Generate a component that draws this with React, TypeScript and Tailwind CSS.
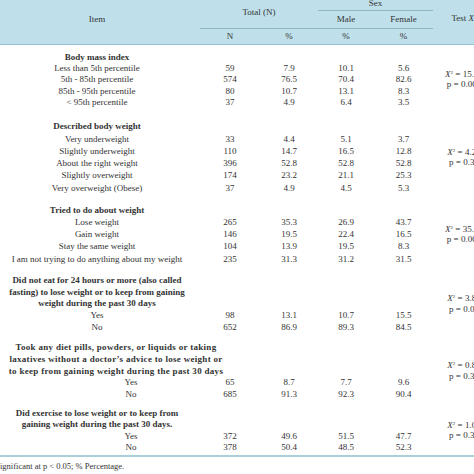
type Row = [string, string, string, string, string];

type Section = {
  heading: string[];
  headingClass?: string;
  itemShift?: string;
  gap: string;
  rowClass: string;
  rows: Row[];
  chi: string;
  p: string;
};

const sections: Section[] = [
  {
    heading: ['Body mass index'],
    gap: 'mt-[6.5px]',
    rowClass: 'h-[11.3px] leading-[11.3px]',
    rows: [
      ['Less than 5th percentile', '59', '7.9', '10.1', '5.6'],
      ['5th - 85th percentile', '574', '76.5', '70.4', '82.6'],
      ['85th - 95th percentile', '80', '10.7', '13.1', '8.3'],
      ['< 95th percentile', '37', '4.9', '6.4', '3.5'],
    ],
    chi: '15.46',
    p: '0.002',
  },
  {
    heading: ['Described body weight'],
    gap: 'mt-[13px]',
    rowClass: 'h-[12.2px] leading-[12.2px]',
    rows: [
      ['Very underweight', '33', '4.4', '5.1', '3.7'],
      ['Slightly underweight', '110', '14.7', '16.5', '12.8'],
      ['About the right weight', '396', '52.8', '52.8', '52.8'],
      ['Slightly overweight', '174', '23.2', '21.1', '25.3'],
      ['Very overweight (Obese)', '37', '4.9', '4.5', '5.3'],
    ],
    chi: '4.25',
    p: '0.37',
  },
  {
    heading: ['Tried to do about weight'],
    gap: 'mt-[10.7px]',
    rowClass: 'h-[12.2px] leading-[12.2px]',
    rows: [
      ['Lose weight', '265', '35.3', '26.9', '43.7'],
      ['Gain weight', '146', '19.5', '22.4', '16.5'],
      ['Stay the same weight', '104', '13.9', '19.5', '8.3'],
      ['I am not trying to do anything about my weight', '235', '31.3', '31.2', '31.5'],
    ],
    chi: '35.12',
    p: '0.001',
  },
  {
    heading: [
      'Did not eat for 24 hours or more (also called',
      'fasting) to lose weight or to keep from gaining',
      'weight during the past 30 days',
    ],
    gap: 'mt-[10.2px]',
    rowClass: 'h-[11.8px] leading-[11.8px]',
    rows: [
      ['Yes', '98', '13.1', '10.7', '15.5'],
      ['No', '652', '86.9', '89.3', '84.5'],
    ],
    chi: '3.85',
    p: '0.05',
  },
  {
    heading: [
      'Took any diet pills, powders, or liquids or taking',
      'laxatives without a doctor\u2019s advice to lose weight or',
      'to keep from gaining weight during the past 30 days',
    ],
    headingClass: 'w-[244px] tracking-[0.3px]',
    itemShift: 'pl-[68px]',
    gap: 'mt-[9px]',
    rowClass: 'h-[11.5px] leading-[11.5px]',
    rows: [
      ['Yes', '65', '8.7', '7.7', '9.6'],
      ['No', '685', '91.3', '92.3', '90.4'],
    ],
    chi: '0.87',
    p: '0.35',
  },
  {
    heading: ['Did exercise to lose weight or to keep from', 'gaining weight during the past 30 days.'],
    itemShift: 'pl-[68px]',
    gap: 'mt-[7.4px]',
    rowClass: 'h-[11.7px] leading-[11.7px]',
    rows: [
      ['Yes', '372', '49.6', '51.5', '47.7'],
      ['No', '378', '50.4', '48.5', '52.3'],
    ],
    chi: '1.06',
    p: '0.30',
  },
];

function Chi() {
  return (
    <span>
      <i>X</i>
      <span className="text-[5px] relative top-[-3px]">2</span>
    </span>
  );
}

export default function App() {
  return (
    <div className="w-[474px] h-[474px] overflow-hidden bg-white text-[#333] font-['Liberation_Serif',serif] text-[9px]">
      <div className="ml-[-6px] w-[501px]">
        {/* Header */}
        <div className="-mt-[3px] bg-[#bfe0ea] border-b border-[#94c0cf] grid grid-cols-[206px_60px_58px_56px_59px_62px] grid-rows-[14px_18px_15px] text-center leading-none">
          <div className="row-span-3 flex items-center justify-center pb-[2px]">Item</div>
          <div className="col-span-2 row-span-2 flex items-center justify-center border-b border-[#8fb6c6]">
            Total (N)
          </div>
          <div className="col-span-2 flex items-center justify-center border-b border-[#8fb6c6]">Sex</div>
          <div className="row-span-3 flex items-center justify-center pb-[4px]">
            <span>
              Test <Chi />
            </span>
          </div>
          <div className="flex items-center justify-center border-b border-[#8fb6c6]">Male</div>
          <div className="flex items-center justify-center border-b border-[#8fb6c6]">Female</div>
          <div className="flex items-center justify-center">N</div>
          <div className="flex items-center justify-center">%</div>
          <div className="flex items-center justify-center">%</div>
          <div className="flex items-center justify-center">%</div>
        </div>

        {/* Body */}
        {sections.map((s, i) => (
          <div key={i} className={`flex ${s.gap}`}>
            <div className="w-[439px]">
              <div
                className={`${s.headingClass ?? 'w-[206px]'} text-center font-bold leading-[11.6px] whitespace-nowrap`}
              >
                {s.heading.map((line, j) => (
                  <div key={j}>{line}</div>
                ))}
              </div>
              {s.rows.map((r, j) => (
                <div
                  key={j}
                  className={`grid grid-cols-[206px_60px_58px_56px_59px] ${s.rowClass} text-center whitespace-nowrap`}
                >
                  <div className={s.itemShift}>{r[0]}</div>
                  <div>{r[1]}</div>
                  <div>{r[2]}</div>
                  <div>{r[3]}</div>
                  <div>{r[4]}</div>
                </div>
              ))}
            </div>
            <div className="w-[62px] flex flex-col items-center justify-center leading-[9.5px] whitespace-nowrap">
              <div>
                <Chi /> = {s.chi}
              </div>
              <div>p = {s.p}</div>
            </div>
          </div>
        ))}

        <div className="mt-[1px] h-[2px] bg-[#a9cfd9]" />
        <div className="mt-[5px] ml-[-3px] text-[8.5px] leading-none">*Significant at p &lt; 0.05; % Percentage.</div>
      </div>
    </div>
  );
}
